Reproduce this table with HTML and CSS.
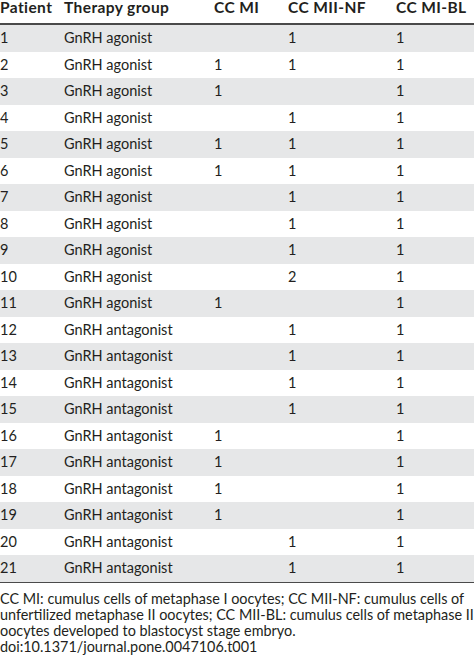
FILE: index.html
```html
<!DOCTYPE html>
<html>
<head>
<meta charset="utf-8">
<link rel="stylesheet" href="styles.css">
</head>
<body>
<div class="table">
  <div class="row head"><div>Patient</div><div>Therapy group</div><div>CC MI</div><div>CC MII-NF</div><div>CC MI-BL</div></div>
  <div class="body">
    <div class="row"><div>1</div><div>GnRH agonist</div><div></div><div>1</div><div>1</div></div>
    <div class="row"><div>2</div><div>GnRH agonist</div><div>1</div><div>1</div><div>1</div></div>
    <div class="row"><div>3</div><div>GnRH agonist</div><div>1</div><div></div><div>1</div></div>
    <div class="row"><div>4</div><div>GnRH agonist</div><div></div><div>1</div><div>1</div></div>
    <div class="row"><div>5</div><div>GnRH agonist</div><div>1</div><div>1</div><div>1</div></div>
    <div class="row"><div>6</div><div>GnRH agonist</div><div>1</div><div>1</div><div>1</div></div>
    <div class="row"><div>7</div><div>GnRH agonist</div><div></div><div>1</div><div>1</div></div>
    <div class="row"><div>8</div><div>GnRH agonist</div><div></div><div>1</div><div>1</div></div>
    <div class="row"><div>9</div><div>GnRH agonist</div><div></div><div>1</div><div>1</div></div>
    <div class="row"><div>10</div><div>GnRH agonist</div><div></div><div>2</div><div>1</div></div>
    <div class="row"><div>11</div><div>GnRH agonist</div><div>1</div><div></div><div>1</div></div>
    <div class="row"><div>12</div><div>GnRH antagonist</div><div></div><div>1</div><div>1</div></div>
    <div class="row"><div>13</div><div>GnRH antagonist</div><div></div><div>1</div><div>1</div></div>
    <div class="row"><div>14</div><div>GnRH antagonist</div><div></div><div>1</div><div>1</div></div>
    <div class="row"><div>15</div><div>GnRH antagonist</div><div></div><div>1</div><div>1</div></div>
    <div class="row"><div>16</div><div>GnRH antagonist</div><div>1</div><div></div><div>1</div></div>
    <div class="row"><div>17</div><div>GnRH antagonist</div><div>1</div><div></div><div>1</div></div>
    <div class="row"><div>18</div><div>GnRH antagonist</div><div>1</div><div></div><div>1</div></div>
    <div class="row"><div>19</div><div>GnRH antagonist</div><div>1</div><div></div><div>1</div></div>
    <div class="row"><div>20</div><div>GnRH antagonist</div><div></div><div>1</div><div>1</div></div>
    <div class="row"><div>21</div><div>GnRH antagonist</div><div></div><div>1</div><div>1</div></div>
  </div>
</div>
<p class="note">CC MI: cumulus cells of metaphase I oocytes; CC MII-NF: cumulus cells of<br>unfertilized metaphase II oocytes; CC MII-BL: cumulus cells of metaphase II<br>oocytes developed to blastocyst stage embryo.<br>doi:10.1371/journal.pone.0047106.t001</p>
</body>
</html>
```
FILE: styles.css
```css
html, body {
  margin: 0;
  padding: 0;
  background: #ffffff;
}
body {
  width: 474px;
  height: 666px;
  overflow: hidden;
  font-family: Lato, "Liberation Sans", sans-serif;
  color: #231f20;
}
.table {
  display: flex;
  flex-direction: column;
}
.row {
  display: grid;
  grid-template-columns: 64px 150px 74px 108px 1fr;
  font-size: 14.5px;
  height: 26.5px;
  line-height: 25.5px;
  white-space: nowrap;
}
.head {
  height: 23px;
  line-height: 15px;
  font-size: 15.5px;
  font-weight: 700;
  letter-spacing: 0.4px;
  border-bottom: 2px solid #4a4a4a;
}
.body {
  border-bottom: 1.5px solid #4a4a4a;
}
.body .row:nth-child(odd) {
  background: #e6e7e8;
}
.note {
  margin: 0;
  padding-top: 8.5px;
  font-size: 14.4px;
  line-height: 16px;
  white-space: nowrap;
}
```
